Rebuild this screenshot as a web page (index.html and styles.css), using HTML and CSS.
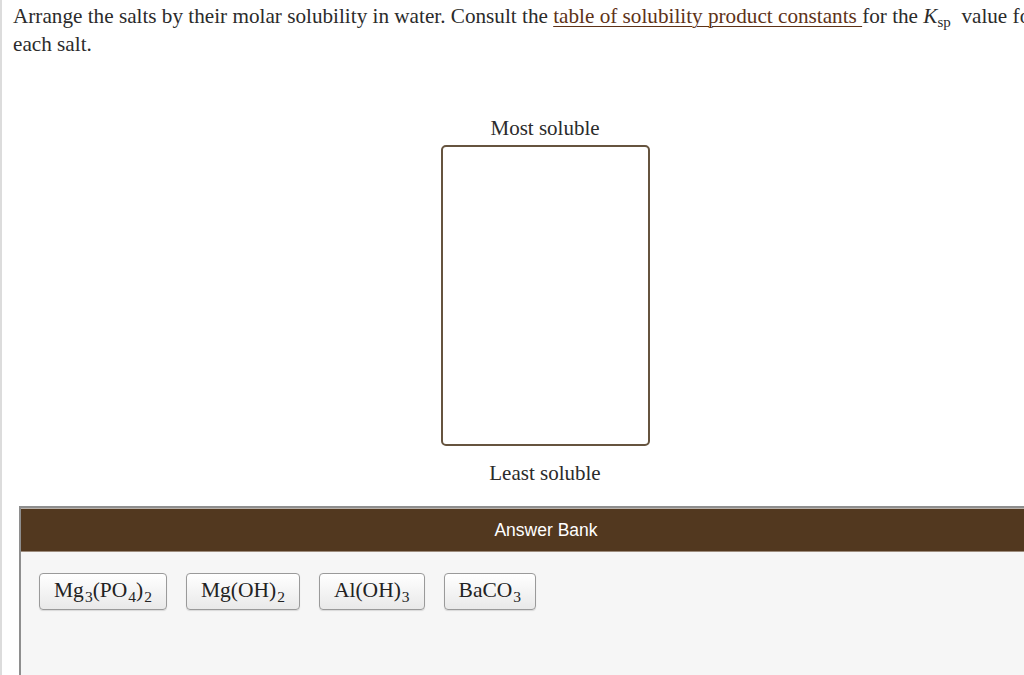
FILE: index.html
```html
<!DOCTYPE html>
<html lang="en">
<head>
<meta charset="utf-8">
<title>Arrange salts by molar solubility</title>
<link rel="stylesheet" href="styles.css">
</head>
<body>
<div class="page">
  <div class="content">
    <p class="prompt">Arrange the salts by their molar solubility in water. Consult the <a class="link" href="#">table of solubility product constants </a>for the <i>K</i><sub>sp</sub>&nbsp; value for each salt.</p>
    <div class="sorter">
      <div class="label label-top">Most soluble</div>
      <div class="dropbox"></div>
      <div class="label label-bottom">Least soluble</div>
    </div>
    <div class="bank">
      <div class="bank-head">Answer Bank</div>
      <div class="bank-body">
        <div class="chip"><span class="formula">Mg<sub>3</sub>(PO<sub>4</sub>)<sub>2</sub></span></div>
        <div class="chip"><span class="formula">Mg(OH)<sub>2</sub></span></div>
        <div class="chip"><span class="formula">Al(OH)<sub>3</sub></span></div>
        <div class="chip"><span class="formula">BaCO<sub>3</sub></span></div>
      </div>
    </div>
  </div>
</div>
</body>
</html>
```

FILE: styles.css
```css
html, body {
  margin: 0;
  padding: 0;
  overflow: hidden;
  background: #ffffff;
}

.page {
  border-left: 2px solid #dcdcdc;
  min-height: 100vh;
  padding-left: 11px;
  box-sizing: border-box;
}

.content {
  width: 1064px;
  font-family: "Liberation Serif", "Times New Roman", serif;
  color: #2b2b2b;
}

.prompt {
  margin: 0;
  padding-top: 2px;
  font-size: 21.2px;
  line-height: 28px;
}

.prompt sub {
  font-size: 15px;
  line-height: 0;
  vertical-align: -4px;
}

.link {
  color: #5e3217;
  text-decoration: underline;
  text-decoration-thickness: 1px;
  text-underline-offset: 3px;
}

.sorter {
  display: flex;
  flex-direction: column;
  align-items: center;
  margin-top: 58px;
}

.label {
  font-size: 21px;
  line-height: 24px;
  color: #2b2b2b;
}

.label-top {
  margin-bottom: 5px;
}

.dropbox {
  width: 209px;
  height: 301px;
  box-sizing: border-box;
  border: 2px solid #66543f;
  border-radius: 5px;
  background: #ffffff;
}

.label-bottom {
  margin-top: 15px;
}

.bank {
  margin-top: 21px;
  margin-left: 6px;
  width: 1052px;
  border-top: 2px solid #8e8e8e;
  border-left: 2px solid #8e8e8e;
  background: #f6f6f6;
}

.bank-head {
  background: #52381f;
  border-top: 1px solid #b9b2ab;
  border-bottom: 1px solid #9c8b7c;
  height: 42px;
  display: flex;
  align-items: center;
  justify-content: center;
  color: #ffffff;
  font-family: "Liberation Sans", Arial, sans-serif;
  font-size: 17.5px;
  padding-right: 2px;
}

.bank-body {
  display: flex;
  gap: 19px;
  padding: 21px 18px 0;
  min-height: 160px;
  align-items: flex-start;
}

.chip {
  height: 37px;
  box-sizing: border-box;
  padding: 0 14px;
  border: 1px solid #9a9a9a;
  border-radius: 4px;
  background: linear-gradient(#ffffff, #e9e9e9);
  box-shadow: 0 1px 1px rgba(0, 0, 0, 0.12);
  display: flex;
  align-items: center;
  color: #222222;
  white-space: nowrap;
}

.formula {
  font-size: 21.5px;
  line-height: 24px;
  position: relative;
  top: -2px;
}

.formula sub {
  font-size: 15.5px;
  line-height: 0;
  vertical-align: -5px;
  margin-left: 1px;
}
```
